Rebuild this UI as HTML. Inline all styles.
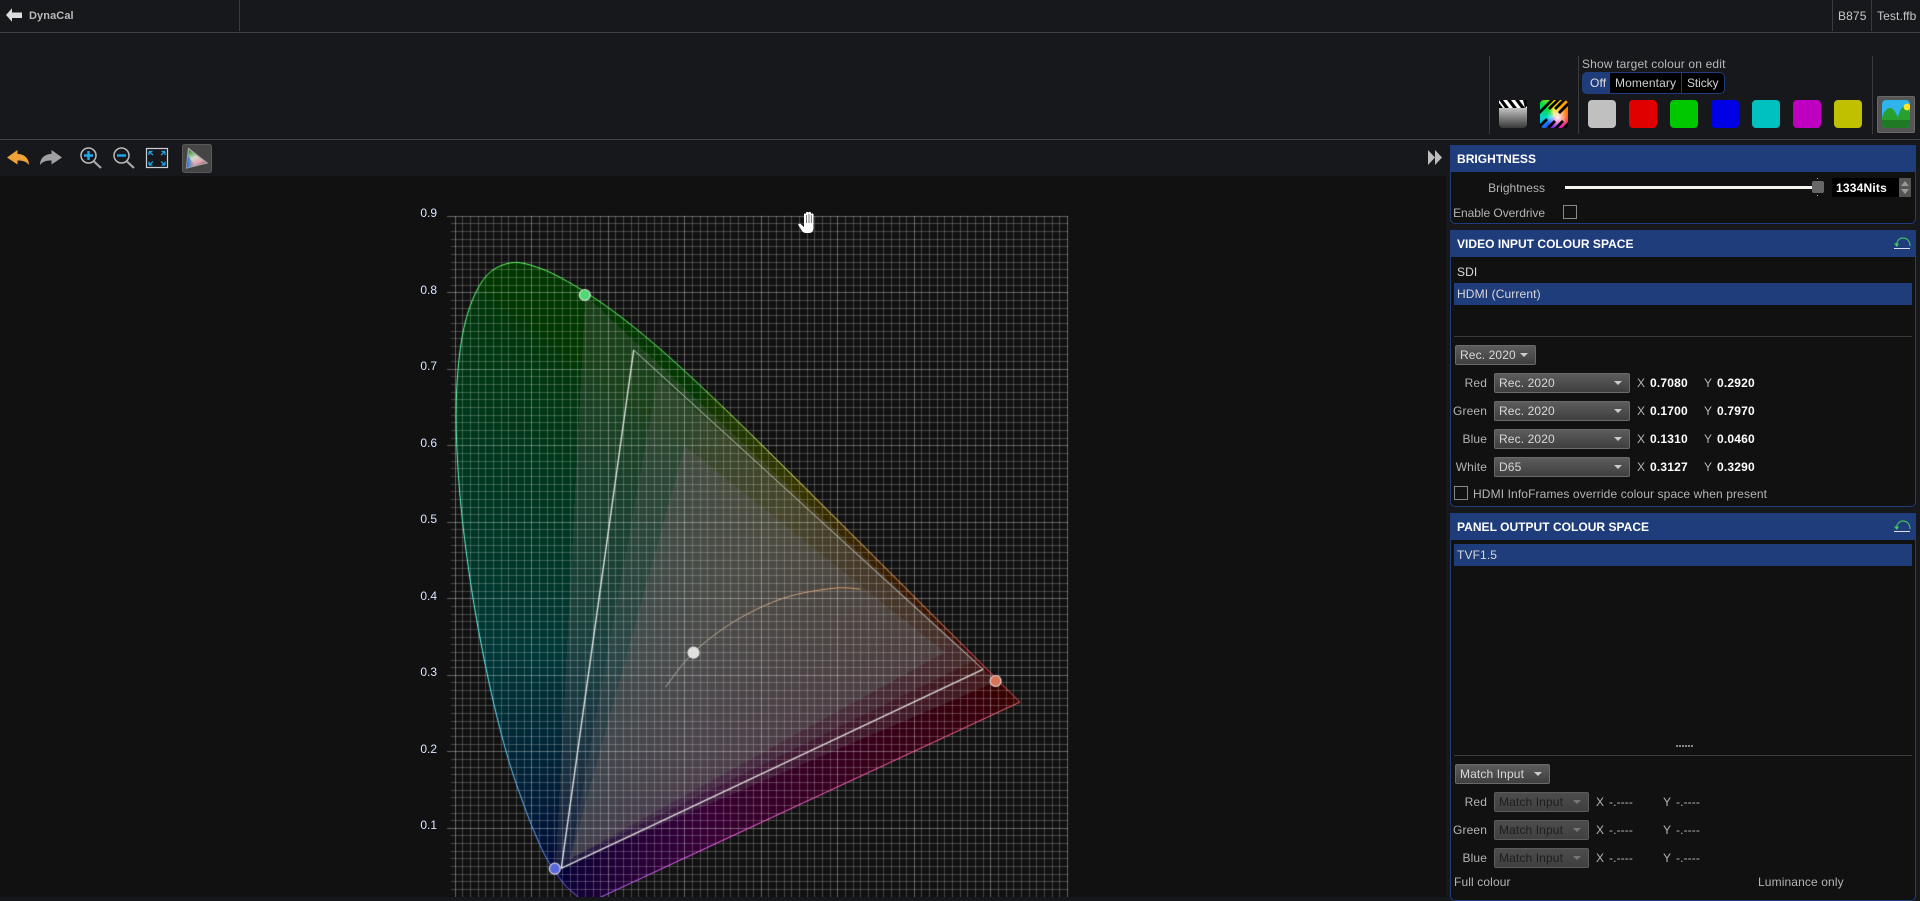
<!DOCTYPE html>
<html lang="en">
<head>
<meta charset="utf-8">
<title>DynaCal</title>
<style>
html,body{margin:0;padding:0;width:1920px;height:897px;overflow:hidden;background:#17181b;font-family:"Liberation Sans",sans-serif;font-size:12px;color:#b4b4b4}
.a{position:absolute}
.t{position:absolute;white-space:nowrap;line-height:16px;letter-spacing:.12px}
.b{font-weight:bold;color:#fff;letter-spacing:.2px}
.r{text-align:right}
.hd{position:absolute;left:1450px;width:466px;height:27px;background:#1f3d7a;color:#fff;font-weight:bold;line-height:29px;text-indent:7px;font-size:12px;letter-spacing:.03px}
.bd{position:absolute;left:1450px;width:464px;background:#111;border:1px solid #1f3d7a;border-top:0;border-radius:0 0 5px 5px}
.sel{position:absolute;left:1454px;width:458px;height:22px;background:#1f3d7a}
.sep{position:absolute;left:1454px;width:458px;height:1px;background:#3a3a3a}
.dd{position:absolute;height:18px;background:linear-gradient(#5c5c5c,#3f3f3f);border:1px solid #6a6a6a;border-radius:2px;color:#d8d8d8;line-height:18px;text-indent:4px;letter-spacing:.12px;white-space:nowrap;box-sizing:content-box}
.dd:after{content:"";position:absolute;right:7px;top:7px;border-left:4px solid transparent;border-right:4px solid transparent;border-top:4px solid #ccc}
.dis{background:linear-gradient(#4c4c4c,#404040);border-color:#5c5c5c;color:#1e1e1e}
.dis:after{border-top-color:#777}
.cb{position:absolute;width:12px;height:12px;border:1px solid #888;background:#111}
.sw{position:absolute;top:100px;width:28px;height:28px;border-radius:4px}
.v{position:absolute;width:1px;background:#3c3c3e}
</style>
</head>
<body>
<!-- top bars -->
<div class="a" style="left:0;top:32px;width:1920px;height:1px;background:#414143"></div>
<div class="a" style="left:0;top:139px;width:1920px;height:1px;background:#414143"></div>
<div class="v" style="left:239px;top:0;height:31px"></div>
<div class="v" style="left:1832px;top:0;height:31px"></div>
<div class="v" style="left:1871px;top:0;height:31px"></div>
<svg class="a" style="left:0;top:0" width="30" height="30"><path d="M6 15L12 8.3V12.5H22V18H12V21.7Z" fill="#dcdcdc"/></svg>
<div class="t" style="left:29px;top:8px;font-size:11px;font-weight:bold;color:#b9b9b9;letter-spacing:.1px">DynaCal</div>
<div class="t" style="left:1838px;top:8px;color:#c8c8c8">B875</div>
<div class="t" style="left:1877px;top:8px;color:#c8c8c8">Test.ffb</div>

<!-- top tool row -->
<div class="v" style="left:1489px;top:56px;height:78px"></div>
<div class="v" style="left:1578px;top:56px;height:78px"></div>
<div class="v" style="left:1872px;top:56px;height:78px"></div>
<svg class="a" style="left:1499px;top:100px" width="28" height="28">
<defs><linearGradient id="cg" x1="0" y1="0" x2="0" y2="1"><stop offset=".2" stop-color="#d4d4d4"/><stop offset="1" stop-color="#383838"/></linearGradient></defs>
<rect x="0" y="0" width="28" height="28" rx="4" fill="url(#cg)"/>
<rect x="0" y="0" width="28" height="8" fill="#fff"/>
<path d="M0 0H4L10 8H6ZM8 0H12L18 8H14ZM16 0H20L26 8H22ZM24 0H28V6L26 8ZM0 3L4 8H0Z" fill="#000"/>
</svg>
<div class="a" style="left:1540px;top:100px;width:28px;height:28px;border-radius:4px;overflow:hidden;background:radial-gradient(circle at 62% 62%,#fff 0,rgba(255,255,255,.6) 18%,rgba(255,255,255,0) 45%),conic-gradient(from 0deg at 50% 60%,#ffe000,#ff5000 25%,#e000c0 42%,#2040ff 58%,#00d0e0 72%,#00e040 88%,#ffe000)"></div>
<svg class="a" style="left:1540px;top:100px" width="28" height="28"><path d="M0 10L10 0H14L0 14ZM16 0H20L10 10 8 8ZM22 0H26L16 10 14 8ZM28 2V6L20 14 18 12ZM0 24L6 18 8 20 0 28ZM6 28L14 20 16 22 10 28ZM14 28L22 20 24 22 18 28ZM22 28L28 22V26L26 28Z" fill="#000"/></svg>
<div class="t" style="left:1582px;top:56px;color:#b8b8b8;letter-spacing:.16px">Show target colour on edit</div>
<div class="a" style="left:1582px;top:72px;width:141px;height:20px;background:#000;border:1px solid #1f3d7a;border-radius:5px"></div>
<div class="a" style="left:1582px;top:72px;width:28px;height:22px;background:#1f3d7a;border-radius:5px 0 0 5px"></div>
<div class="a" style="left:1681px;top:72px;width:1px;height:22px;background:#1f3d7a"></div>
<div class="t" style="left:1590px;top:75px;color:#e0e0e0">Off</div>
<div class="t" style="left:1615px;top:75px;color:#d0d0d0">Momentary</div>
<div class="t" style="left:1687px;top:75px;color:#d0d0d0;letter-spacing:-.1px">Sticky</div>
<div class="sw" style="left:1588px;background:#c0c0c0"></div>
<div class="sw" style="left:1629px;background:#e10000"></div>
<div class="sw" style="left:1670px;background:#00c800"></div>
<div class="sw" style="left:1711px;background:#0000e6"></div>
<div class="sw" style="left:1752px;background:#00c0c0"></div>
<div class="sw" style="left:1793px;background:#c000c0"></div>
<div class="sw" style="left:1834px;background:#c0c000"></div>
<div class="a" style="left:1877px;top:96px;width:36px;height:35px;background:#555;border:1px solid #686868;border-radius:2px"></div>
<svg class="a" style="left:1882px;top:100px" width="28" height="28">
<rect width="28" height="28" rx="4" fill="#2fb4ee"/>
<path d="M0 18C2 11 5 8 8 8C12 8 14 14 16 17C18 9 21 6 23 6C25 6 27 10 28 13V24C28 26 26 28 24 28H4C2 28 0 26 0 24Z" fill="#28a030"/>
<path d="M0 20H28V24C28 26 26 28 24 28H4C2 28 0 26 0 24Z" fill="#1f7a25"/>
<circle cx="25" cy="7" r="3.4" fill="#ffe620"/>
</svg>

<!-- view toolbar -->
<svg class="a" style="left:0;top:140px" width="230" height="36">
<g transform="translate(0,-140)">
<path d="M7 157.5L17.5 150V154C24 154 29 158 29 165C26 161 22 160.5 17.5 160.5V164.5Z" fill="#f0a238"/>
<path d="M62 157.5L51.5 150V154C45 154 40 158 40 165C43 161 47 160.5 51.5 160.5V164.5Z" fill="#a0a0a0"/>
<circle cx="88.5" cy="155.5" r="7.5" fill="none" stroke="#bcbcbc" stroke-width="1.5"/>
<path d="M84 155.5H93M88.5 151V160" stroke="#1fa8ea" stroke-width="2.4"/>
<path d="M94 161.5L101 168" stroke="#a8a8a8" stroke-width="2.2"/>
<circle cx="121.5" cy="155.5" r="7.5" fill="none" stroke="#bcbcbc" stroke-width="1.5"/>
<path d="M117 155.5H126" stroke="#1fa8ea" stroke-width="2.4"/>
<path d="M127 161.5L134 168" stroke="#a8a8a8" stroke-width="2.2"/>
<rect x="146.5" y="148.5" width="21" height="19" fill="none" stroke="#c8d0d8" stroke-width="1.2"/>
<path d="M149 151.5L153 155M149 151.5H152.5M149 151.5V155M165 151.5L161 155M165 151.5H161.5M165 151.5V155M149 165L153 161.5M149 165H152.5M149 165V161.5M165 165L161 161.5M165 165H161.5M165 165V161.5" stroke="#1fa8ea" stroke-width="1.2" fill="none"/>
<rect x="182.5" y="144.5" width="29" height="28" rx="2" fill="#454545" stroke="#585858"/>
<defs>
<linearGradient id="tg" x1="0.2" y1="0" x2="0.7" y2="1"><stop offset="0" stop-color="#0a8a1a"/><stop offset=".45" stop-color="#d8d8c8"/><stop offset=".75" stop-color="#e0a0b0"/><stop offset="1" stop-color="#6a1818"/></linearGradient>
<linearGradient id="tb" x1="0" y1="0" x2="1" y2="0"><stop offset="0" stop-color="#1a70d0"/><stop offset="1" stop-color="#1a70d0" stop-opacity="0"/></linearGradient>
</defs>
<path d="M188.500 148.500L207 163L186.500 168Z" fill="url(#tg)" stroke="#a8a8a8" stroke-width="1.2"/>
<path d="M188 156L195 165L186.500 168Z" fill="url(#tb)"/>
</g>
</svg>
<svg class="a" style="left:1426px;top:148px" width="18" height="19"><path d="M2 2L9 9.500 2 17ZM9 2L16 9.500 9 17Z" fill="#bdbdbd"/></svg>

<!-- chart -->
<div class="a" style="left:0;top:176px;width:1446px;height:721px;background:#111112"></div>
<canvas id="c" class="a" style="left:440px;top:176px" width="640" height="721"></canvas>
<div class="t r" style="left:400px;width:37px;top:205px;color:#dbe6ff;letter-spacing:0">0.9</div>
<div class="t r" style="left:400px;width:37px;top:282px;color:#dbe6ff;letter-spacing:0">0.8</div>
<div class="t r" style="left:400px;width:37px;top:358px;color:#dbe6ff;letter-spacing:0">0.7</div>
<div class="t r" style="left:400px;width:37px;top:435px;color:#dbe6ff;letter-spacing:0">0.6</div>
<div class="t r" style="left:400px;width:37px;top:511px;color:#dbe6ff;letter-spacing:0">0.5</div>
<div class="t r" style="left:400px;width:37px;top:588px;color:#dbe6ff;letter-spacing:0">0.4</div>
<div class="t r" style="left:400px;width:37px;top:664px;color:#dbe6ff;letter-spacing:0">0.3</div>
<div class="t r" style="left:400px;width:37px;top:741px;color:#dbe6ff;letter-spacing:0">0.2</div>
<div class="t r" style="left:400px;width:37px;top:817px;color:#dbe6ff;letter-spacing:0">0.1</div>
<svg class="a" style="left:790px;top:205px" width="32" height="32">
<g transform="translate(-790,-205)">
<path d="M798 224.500L800 223.500L804 227V214.500C804 213 806 213 806 214.500V213C806 211.500 808.500 211.500 808.500 213V213C808.500 211.500 811 211.500 811 213V214.500C811 213 813.500 213 813.500 214.500V228C813.500 231 812 233 809 233H806C804 233 803 232 802 231Z" fill="#fff"/>
<path d="M806.500 215V223M809 214V223M811.300 215V223" stroke="#555" stroke-width=".8"/>
</g>
</svg>

<!-- panel side -->
<div class="hd" style="top:145px">BRIGHTNESS</div>
<div class="bd" style="top:172px;height:51px"></div>
<div class="t r" style="left:1440px;width:105px;top:180px;letter-spacing:.02px">Brightness</div>
<div class="a" style="left:1565px;top:186px;width:247px;height:3px;background:#f4f4f0"></div>
<div class="a" style="left:1812px;top:181px;width:12px;height:12px;background:#666;border-radius:2px"></div>
<div class="a" style="left:1817px;top:178px;width:1px;height:1px;background:#bbb"></div>
<div class="a" style="left:1817px;top:195px;width:1px;height:1px;background:#bbb"></div>
<div class="a" style="left:1832px;top:178px;width:79px;height:19px;background:#000"></div>
<div class="t b" style="left:1836px;top:180px">1334Nits</div>
<div class="a" style="left:1899px;top:178px;width:12px;height:19px;background:#555"></div>
<svg class="a" style="left:1899px;top:178px" width="12" height="19"><path d="M6 3L10 8H2ZM2 11H10L6 16Z" fill="#999"/></svg>
<div class="t r" style="left:1440px;width:105px;top:205px;letter-spacing:-.05px">Enable Overdrive</div>
<div class="cb" style="left:1563px;top:205px"></div>

<div class="hd" style="top:230px">VIDEO INPUT COLOUR SPACE</div>
<svg class="a" style="left:1894px;top:236px" width="17" height="15"><path d="M2.500 10C2.500 4 6 2 9 2C13 2 16 5 16 10" fill="none" stroke="#3fbf5f" stroke-width="1.2"/><path d="M0 7.500L5 7.500L3 11Z" fill="#3fd05f"/><path d="M0 12.500H16" stroke="#dde" stroke-width="1"/></svg>
<div class="bd" style="top:257px;height:249px"></div>
<div class="t" style="left:1457px;top:264px;color:#d8d8d8">SDI</div>
<div class="sel" style="top:283px"></div>
<div class="t" style="left:1457px;top:286px;color:#d8d8d8">HDMI (Current)</div>
<div class="sep" style="top:336px"></div>
<div class="dd" style="left:1455px;top:345px;width:79px">Rec. 2020</div>
<div class="t r" style="left:1440px;width:47px;top:375px">Red</div>
<div class="dd" style="left:1494px;top:373px;width:134px">Rec. 2020</div>
<div class="t" style="left:1637px;top:375px">X</div><div class="t b" style="left:1650px;top:375px">0.7080</div>
<div class="t" style="left:1704px;top:375px">Y</div><div class="t b" style="left:1717px;top:375px">0.2920</div>
<div class="t r" style="left:1440px;width:47px;top:403px">Green</div>
<div class="dd" style="left:1494px;top:401px;width:134px">Rec. 2020</div>
<div class="t" style="left:1637px;top:403px">X</div><div class="t b" style="left:1650px;top:403px">0.1700</div>
<div class="t" style="left:1704px;top:403px">Y</div><div class="t b" style="left:1717px;top:403px">0.7970</div>
<div class="t r" style="left:1440px;width:47px;top:431px">Blue</div>
<div class="dd" style="left:1494px;top:429px;width:134px">Rec. 2020</div>
<div class="t" style="left:1637px;top:431px">X</div><div class="t b" style="left:1650px;top:431px">0.1310</div>
<div class="t" style="left:1704px;top:431px">Y</div><div class="t b" style="left:1717px;top:431px">0.0460</div>
<div class="t r" style="left:1440px;width:47px;top:459px">White</div>
<div class="dd" style="left:1494px;top:457px;width:134px">D65</div>
<div class="t" style="left:1637px;top:459px">X</div><div class="t b" style="left:1650px;top:459px">0.3127</div>
<div class="t" style="left:1704px;top:459px">Y</div><div class="t b" style="left:1717px;top:459px">0.3290</div>
<div class="cb" style="left:1454px;top:486px"></div>
<div class="t" style="left:1473px;top:486px">HDMI InfoFrames override colour space when present</div>

<div class="hd" style="top:513px">PANEL OUTPUT COLOUR SPACE</div>
<svg class="a" style="left:1894px;top:519px" width="17" height="15"><path d="M2.500 10C2.500 4 6 2 9 2C13 2 16 5 16 10" fill="none" stroke="#3fbf5f" stroke-width="1.2"/><path d="M0 7.500L5 7.500L3 11Z" fill="#3fd05f"/><path d="M0 12.500H16" stroke="#dde" stroke-width="1"/></svg>
<div class="bd" style="top:540px;height:360px"></div>
<div class="sel" style="top:544px"></div>
<div class="t" style="left:1457px;top:547px;color:#d8d8d8">TVF1.5</div>
<div class="a" style="left:1676px;top:745px;width:17px;height:2px;background:repeating-linear-gradient(90deg,#888 0 2px,transparent 2px 3px)"></div>
<div class="sep" style="top:755px"></div>
<div class="dd" style="left:1455px;top:764px;width:93px">Match Input</div>
<div class="t r" style="left:1440px;width:47px;top:794px">Red</div>
<div class="dd dis" style="left:1494px;top:792px;width:93px">Match Input</div>
<div class="t" style="left:1596px;top:794px">X</div><div class="t" style="left:1609px;top:794px">-.----</div>
<div class="t" style="left:1663px;top:794px">Y</div><div class="t" style="left:1676px;top:794px">-.----</div>
<div class="t r" style="left:1440px;width:47px;top:822px">Green</div>
<div class="dd dis" style="left:1494px;top:820px;width:93px">Match Input</div>
<div class="t" style="left:1596px;top:822px">X</div><div class="t" style="left:1609px;top:822px">-.----</div>
<div class="t" style="left:1663px;top:822px">Y</div><div class="t" style="left:1676px;top:822px">-.----</div>
<div class="t r" style="left:1440px;width:47px;top:850px">Blue</div>
<div class="dd dis" style="left:1494px;top:848px;width:93px">Match Input</div>
<div class="t" style="left:1596px;top:850px">X</div><div class="t" style="left:1609px;top:850px">-.----</div>
<div class="t" style="left:1663px;top:850px">Y</div><div class="t" style="left:1676px;top:850px">-.----</div>
<div class="t" style="left:1454px;top:874px">Full colour</div>
<div class="t" style="left:1758px;top:874px">Luminance only</div>

<script>
(function(){
var cv=document.getElementById('c'),ctx=cv.getContext('2d'),OX=440,OY=176,W=640,H=721;
function PX(x){return 455.3+765*x}function PY(y){return 216.3+(0.9-y)*765}
function IX(p){return (p-455.3)/765}function IY(p){return 0.9-(p-216.3)/765}
function smooth(P,n){
  var out=[];
  for(var i=0;i<P.length-1;i++){
    var p0=P[Math.max(i-1,0)],p1=P[i],p2=P[i+1],p3=P[Math.min(i+2,P.length-1)];
    for(var k=0;k<n;k++){
      var t=k/n,t2=t*t,t3=t2*t,q=[0,0];
      for(var c=0;c<2;c++)q[c]=.5*((2*p1[c])+(-p0[c]+p2[c])*t+(2*p0[c]-5*p1[c]+4*p2[c]-p3[c])*t2+(-p0[c]+3*p1[c]-3*p2[c]+p3[c])*t3);
      out.push(q);
    }
  }
  out.push(P[P.length-1]);
  return out;
}
var raw=[[.1741,.005],[.1733,.0048],[.1714,.0051],[.1644,.0109],[.1566,.0177],[.144,.0297],[.1241,.0578],[.1096,.0868],[.0913,.1327],[.0687,.2007],[.0454,.295],[.0235,.4127],[.0082,.5384],[.0039,.6548],[.0139,.7502],[.0389,.812],[.0743,.8338],[.1142,.8262],[.1547,.8059],[.1929,.7816],[.2296,.7543],[.2658,.7243],[.3016,.6923],[.3373,.6589],[.3731,.6245],[.4441,.5547],[.5125,.4866],[.5752,.4242],[.627,.3725],[.6658,.334],[.6915,.3083],[.7079,.292],[.719,.2809],[.726,.274],[.73,.27],[.7347,.2653]];
var L=smooth(raw.map(function(p){return [.33+(p[0]-.33)*1.008,.3+(p[1]-.3)*1.01]}),6);
var G=.45;
function col(x,y){
  if(y<.001)y=.001;
  var X=x/y,Z=(1-x-y)/y;
  var r=3.2406*X-1.5372-.4986*Z,g=-.9689*X+1.8758+.0415*Z,b=.0557*X-.204+1.057*Z;
  r=Math.max(r,0);g=Math.max(g,0);b=Math.max(b,0);
  var m=Math.max(r,g,b,1e-6);
  return [Math.pow(r/m,G),Math.pow(g/m,G),Math.pow(b/m,G)];
}
function sd(p,a,b){return (p[0]-b[0])*(a[1]-b[1])-(a[0]-b[0])*(p[1]-b[1])}
function inT(p,t){var d1=sd(p,t[0],t[1]),d2=sd(p,t[1],t[2]),d3=sd(p,t[2],t[0]);return !((d1<0||d2<0||d3<0)&&(d1>0||d2>0||d3>0))}
var T20=[[.708,.292],[.17,.797],[.131,.046]],TP3=[[.68,.32],[.265,.69],[.15,.06]],T7=[[.64,.33],[.3,.6],[.15,.06]];
var off=document.createElement('canvas');off.width=W;off.height=H;var oc=off.getContext('2d');
var img=oc.createImageData(W,H),d=img.data,BASE=54,GR=86;
for(var j=0;j<H;j++){for(var i=0;i<W;i++){
  var x=IX(i+OX+.5),y=IY(j+OY+.5),p=[x,y],s=0;
  if(inT(p,T7))s=.7;else if(inT(p,TP3))s=.5;else if(inT(p,T20))s=.3;
  var c=col(x,y),k=(j*W+i)*4;
  d[k]=(1-s)*BASE*c[0]+s*GR;d[k+1]=(1-s)*BASE*c[1]+s*GR;d[k+2]=(1-s)*BASE*c[2]+s*GR;d[k+3]=255;
}}
oc.putImageData(img,0,0);
ctx.save();ctx.beginPath();
L.forEach(function(p,i){var a=PX(p[0])-OX,b=PY(p[1])-OY;if(i)ctx.lineTo(a,b);else ctx.moveTo(a,b)});
ctx.closePath();ctx.clip();ctx.drawImage(off,0,0);ctx.restore();
/* grid */
var k2;
for(k2=0;k2<=80;k2++){var gx=Math.floor(455.3+7.65*k2)-OX;ctx.fillStyle=k2%10==0?'rgba(255,255,255,.35)':'rgba(255,255,255,.22)';ctx.fillRect(gx,216-OY,1,H);}
for(k2=0;k2<=90;k2++){var gy=Math.floor(216.3+7.65*k2)-OY,mj=k2%10==0;ctx.fillStyle=mj?'rgba(255,255,255,.35)':'rgba(255,255,255,.22)';var sx=(mj?447:451)-OX;ctx.fillRect(sx,gy,1068-OX-sx,1);}
/* locus stroke */
function strokeSeg(a,b){
  var mx=(a[0]+b[0])/2,my=(a[1]+b[1])/2,c=col(mx,my);
  ctx.strokeStyle='rgb('+[0,1,2].map(function(q){return Math.round(255*(c[q]*.6+.4))}).join(',')+')';
  ctx.lineWidth=1;ctx.beginPath();ctx.moveTo(PX(a[0])-OX,PY(a[1])-OY);ctx.lineTo(PX(b[0])-OX,PY(b[1])-OY);ctx.stroke();
}
for(var n=0;n<L.length-1;n++)strokeSeg(L[n],L[n+1]);
var A=L[L.length-1],B=L[0];
for(n=0;n<40;n++){strokeSeg([A[0]+(B[0]-A[0])*n/40,A[1]+(B[1]-A[1])*n/40],[A[0]+(B[0]-A[0])*(n+1)/40,A[1]+(B[1]-A[1])*(n+1)/40]);}
/* panel triangle */
function seg(a,b,w,c){ctx.strokeStyle=c;ctx.lineWidth=w;ctx.beginPath();ctx.moveTo(a[0]-OX,a[1]-OY);ctx.lineTo(b[0]-OX,b[1]-OY);ctx.stroke();}
var tA=[633.7,350],tB=[983,669.3],tC=[561.3,868.3];
seg(tA,tB,1,'rgba(210,210,205,.9)');
seg(tB,tC,1.3,'rgba(232,232,228,.95)');
seg(tC,tA,1.4,'rgba(235,235,232,.95)');
/* white locus curve */
var cp=smooth([[665.5,687],[693.3,652.7],[735,621],[784,598],[833,588.3],[860,589]],8);
for(n=0;n<cp.length-1;n++){var f=n/(cp.length-2);ctx.strokeStyle='rgb('+Math.round(175+45*f)+','+Math.round(175-15*f)+','+Math.round(170-70*f)+')';ctx.lineWidth=1;ctx.beginPath();ctx.moveTo(cp[n][0]-OX,cp[n][1]-OY);ctx.lineTo(cp[n+1][0]-OX,cp[n+1][1]-OY);ctx.stroke();}
/* markers */
[[693.5,652.7,'#dfe2de'],[584.8,295,'#4fd873'],[995.6,681,'#d9735a'],[554.8,868.7,'#5a68dc']].forEach(function(m){
  ctx.beginPath();ctx.arc(m[0]-OX,m[1]-OY,5.5,0,7);ctx.fillStyle=m[2];ctx.fill();ctx.lineWidth=1.2;ctx.strokeStyle='rgba(235,235,230,.9)';ctx.stroke();
});
})();
</script>
</body>
</html>
